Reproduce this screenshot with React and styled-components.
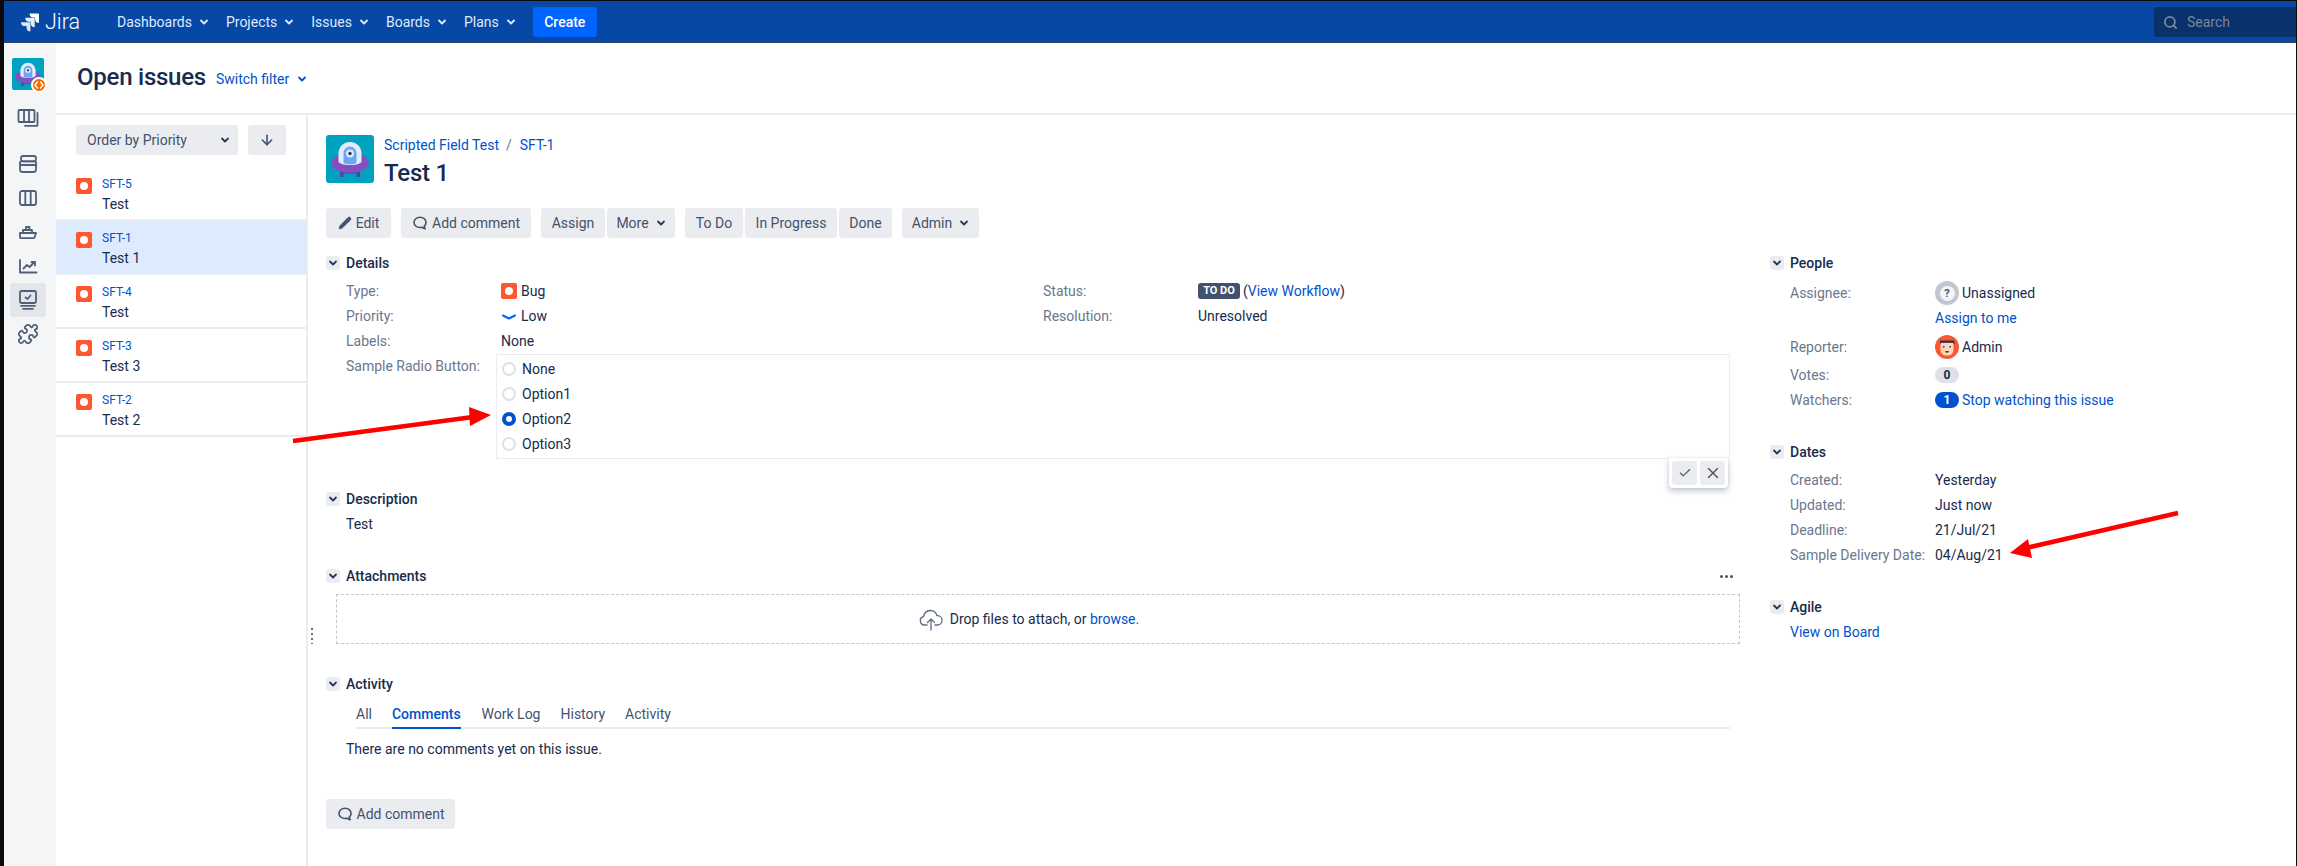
import React from "react";
import styled, { createGlobalStyle } from "styled-components";
import { Puzzle, Search as SearchGlyph, Check, X, ArrowDown, Pencil } from "lucide-react";

const Global = createGlobalStyle`
  html, body { margin: 0; padding: 0; background: #000; }
  body { font: 400 14px/20px Roboto, "Liberation Sans", sans-serif; color: #172b4d; }
  * { box-sizing: border-box; }
`;

const Screen = styled.div`
  position: relative; width: 2297px; height: 866px; overflow: hidden;
  background: #0b0b0b; padding: 1px 1px 0 4px; display: flex; flex-direction: column;
`;
const TopBar = styled.header`
  height: 42px; flex: none; background: #0747a6; border-bottom: 1px solid #2f4468;
  display: flex; align-items: flex-start; padding-top: 6px;
`;
const Logo = styled.div`
  width: 113px; height: 30px; padding-left: 17px; display: flex; align-items: center; gap: 6px; color: #fff;
`;
const LogoWord = styled.span`font: 300 21.5px/30px Roboto, sans-serif;`;
const NavItem = styled.span`
  display: inline-flex; align-items: center; height: 30px; color: #deebff; margin-right: 17px;
`;
const NavChevron = styled.svg`margin-left: 7px; flex: none;`;
const CreateButton = styled.span`
  display: inline-flex; align-items: center; justify-content: center; width: 64px; height: 30px;
  background: #0065ff; color: #fff; border-radius: 3px; font-weight: 500;
`;
const SearchBox = styled.div`
  margin-left: auto; width: 142px; height: 30px; background: #09326c; border-radius: 3px 0 0 3px;
  display: flex; align-items: center; padding-left: 9px; gap: 9px; color: #7a869a;
`;
const Body = styled.div`flex: 1; display: flex; min-height: 0; background: #fff;`;
const Sidebar = styled.nav`
  width: 52px; flex: none; background: #f4f5f7; padding: 15px 4px 0 0; display: flex; flex-direction: column; align-items: center;
`;
const ProjectMark = styled.div`position: relative; width: 32px; height: 32px; margin-bottom: 16px;`;
const SideBadge = styled.span`
  position: absolute; right: -3px; bottom: -3px; width: 16px; height: 16px; border-radius: 50%;
  background: #f26d00; border: 2px solid #fff; display: flex; align-items: center; justify-content: center;
`;
const SideIcon = styled.span`
  width: 36px; height: ${p => p.$h || 34}px; margin-top: ${p => p.$mt || 0}px; flex: none;
  display: flex; align-items: center; justify-content: center; border-radius: 3px; color: #505f79;
  background: ${p => (p.$active ? "#e2e5ea" : "transparent")};
`;
const Main = styled.main`flex: 1; display: flex; flex-direction: column; min-width: 0;`;
const PageHead = styled.div`
  height: 72px; flex: none; border-bottom: 2px solid #ebecf0; padding: 0 0 2px 21px; display: flex; align-items: center;
`;
const PageTitle = styled.h1`margin: 0; font: 500 24px/28px Roboto, sans-serif; letter-spacing: -0.01em; color: #172b4d;`;
const SwitchFilter = styled.a`margin-left: 10px; color: #0052cc; display: inline-flex; align-items: center; gap: 8px; position: relative; top: 2px;`;
const Split = styled.div`flex: 1; display: flex; min-height: 0;`;
const ListPane = styled.aside`width: 252px; flex: none; border-right: 2px solid #ebecf0; padding-top: 10px;`;
const OrderBar = styled.div`display: flex; gap: 10px; padding-left: 20px; margin-bottom: 12px;`;
const OrderSelect = styled.span`
  width: 162px; height: 30px; background: #ebecf0; border-radius: 3px; color: #42526e; padding: 0 8px 0 11px;
  display: flex; align-items: center; justify-content: space-between;
`;
const OrderArrow = styled.span`
  width: 38px; height: 30px; background: #ebecf0; border-radius: 3px; color: #42526e;
  display: flex; align-items: center; justify-content: center;
`;
const IssueRow = styled.div`
  height: 54px; padding: 8px 0 0 20px; border-bottom: 2px solid #ebecf0; display: flex; gap: 10px;
  background: ${p => (p.$selected ? "#deebff" : "#fff")};
`;
const RowIcon = styled.span`margin-top: 3px; flex: none; display: block; height: 16px;`;
const IssueKey = styled.a`display: block; color: #0052cc; font-size: 12px; line-height: 18px;`;
const IssueSummary = styled.div`color: #172b4d; line-height: 20px; margin-top: 1px;`;
const Detail = styled.section`position: relative; flex: 1; padding: 20px 0 0 18px; min-width: 0;`;
const Grip = styled.span`
  position: absolute; left: 3px; top: 513px; width: 2px; height: 16px;
  background: repeating-linear-gradient(to bottom, #5e6c84 0 2px, transparent 2px 5px);
`;
const IssueHead = styled.div`display: flex; gap: 10px; height: 48px;`;
const Crumbs = styled.div`display: flex; color: #0052cc; line-height: 20px;`;
const CrumbSlash = styled.span`color: #6b778c; margin: 0 8px 0 7px;`;
const IssueTitle = styled.h2`margin: 4px 0 0; font: 500 24px/28px Roboto, sans-serif; letter-spacing: -0.01em; color: #172b4d;`;
const Toolbar = styled.div`display: flex; gap: 10px; margin-top: 25px; height: 30px;`;
const ButtonGroup = styled.div`display: flex; gap: 2px;`;
const Btn = styled.span`
  display: inline-flex; align-items: center; justify-content: center; gap: ${p => p.$gap || 0}px; height: 30px;
  width: ${p => p.$w}px; background: #ebecf0; border-radius: 3px; color: #42526e;
`;
const Columns = styled.div`display: grid; grid-template-columns: 1414px 1fr; column-gap: 30px;`;
const ModuleHead = styled.div`
  display: flex; align-items: center; height: 20px; margin-top: ${p => p.$mt}px; gap: 6px; font-weight: 500; color: #172b4d;
`;
const Toggle = styled.span`
  width: 14px; height: 14px; border-radius: 3px; background: #ebecf0; display: flex; align-items: center; justify-content: center; flex: none;
`;
const MoreDots = styled.span`margin-left: auto; padding-right: 7px; display: flex; gap: 2px;`;
const Dot = styled.i`width: 3px; height: 3px; border-radius: 50%; background: #42526e;`;
const FieldGrid = styled.div`display: grid; grid-template-columns: 697px 1fr; margin: 8px 0 0 20px;`;
const Field = styled.div`display: flex; align-items: center; height: 20px; margin-bottom: 5px;`;
const FieldLabel = styled.span`width: ${p => p.$w || 155}px; flex: none; color: #6b778c;`;
const FieldValue = styled.span`display: inline-flex; align-items: center; gap: 4px; color: #172b4d;`;
const Link = styled.a`color: #0052cc;`;
const Lozenge = styled.span`
  height: 16px; width: 42px; border-radius: 3px; background: #42526e; color: #fff; display: inline-flex; align-items: center; justify-content: center;
  font-size: 11px; font-weight: 700; line-height: 16px; margin-right: 3px;
`;
const RadioField = styled.div`display: flex; margin-left: 20px; height: 105px;`;
const RadioBox = styled.div`
  position: relative; width: 1234px; height: 105px; margin: -2px 0 0 -5px; border: 1px solid #ebecf0; padding: 1px 0 0 5px;
`;
const RadioRow = styled.div`display: flex; align-items: center; height: 25px; gap: 6px; color: #172b4d;`;
const Radio = styled.span`
  width: 14px; height: 14px; border-radius: 50%; background: #fff; flex: none;
  border: ${p => (p.$on ? "4px solid #0052cc" : "2px solid #dfe1e6")};
`;
const SavePopup = styled.div`
  position: absolute; right: 1px; top: 103px; width: 59px; height: 30px; background: #fff; border-radius: 0 0 3px 3px;
  box-shadow: 0 3px 6px rgba(9,30,66,.25), 0 0 1px rgba(9,30,66,.31); padding: 3px; display: flex; gap: 3px;
`;
const SaveBtn = styled.span`
  width: 25px; height: 24px; background: #ebecf0; border-radius: 3px; color: #505560; display: flex; align-items: center; justify-content: center;
`;
const Paragraph = styled.p`margin: ${p => p.$mt || 5}px 0 0 20px; line-height: 20px; color: #172b4d;`;
const DropZone = styled.div`
  margin: 8px 0 0 10px; height: 50px; border: 1px dashed #c1c7d0; display: flex; align-items: center; justify-content: center; gap: 7px; padding-right: 18px; color: #172b4d;
`;
const Tabs = styled.div`display: flex; gap: 20px; margin: 10px 10px 0 30px; border-bottom: 2px solid #ebecf0; height: 25px;`;
const Tab = styled.span`
  height: 25px; color: ${p => (p.$active ? "#0052cc" : "#42526e")}; font-weight: ${p => (p.$active ? 500 : 400)};
  border-bottom: 2px solid ${p => (p.$active ? "#0052cc" : "transparent")};
  margin-right: ${p => (p.$active ? 1 : 0)}px;
`;
const BottomButton = styled.div`margin-top: 40px;`;
const SideField = styled.div`display: flex; align-items: center; height: 20px; margin-top: ${p => p.$mt ?? 5}px; padding-left: 20px;`;
const SideValue = styled.span`display: inline-flex; align-items: center; gap: 3px; color: #172b4d;`;
const RoundAvatar = styled.span`
  width: 24px; height: 24px; border-radius: 50%; flex: none; background: #c1c7d0; display: flex; align-items: center; justify-content: center; overflow: hidden;
`;
const AvatarHole = styled.span`
  width: 15px; height: 15px; border-radius: 50%; background: #f4f5f7; color: #42526e; font-size: 11px; font-weight: 700; line-height: 15px; text-align: center;
`;
const Count = styled.span`
  width: 24px; height: 16px; border-radius: 8px; font-size: 12px; font-weight: 700; line-height: 16px; text-align: center; margin-right: 0;
  background: ${p => (p.$blue ? "#0052cc" : "#dfe1e6")}; color: ${p => (p.$blue ? "#fff" : "#172b4d")};
`;
const ArrowLayer = styled.svg`position: absolute; inset: 0; pointer-events: none;`;

const Chevron = ({ size = 10, color = "currentColor", w = 2 }) => (
  <NavChevron as="svg" style={{ margin: 0 }} width={size} height={size} viewBox="0 0 10 10" fill="none">
    <path d="M2 3.5 5 6.5 8 3.5" stroke={color} strokeWidth={w} strokeLinecap="round" strokeLinejoin="round" />
  </NavChevron>
);

const BugIcon = () => (
  <svg width="16" height="16" viewBox="0 0 16 16" style={{ display: "block" }}>
    <rect width="16" height="16" rx="2" fill="#ff5630" />
    <circle cx="8" cy="8" r="4" fill="#fff" />
  </svg>
);

const CommentIcon = () => (
  <svg width="16" height="16" viewBox="0 0 16 16" fill="none">
    <path d="M8 2.2c3.3 0 6 2.3 6 5.2 0 1.5-.7 2.8-1.8 3.7l.9 2.7-3.4-1.5c-.5.1-1.1.2-1.7.2-3.3 0-6-2.3-6-5.1s2.7-5.2 6-5.2z" stroke="#42526e" strokeWidth="1.6" strokeLinejoin="round" />
  </svg>
);

const SpaceAvatar = ({ size }) => (
  <svg width={size} height={size} viewBox="0 0 48 48" style={{ display: "block" }}>
    <rect width="48" height="48" rx="3" fill="#00a3bf" />
    <path d="M14 35h3.500v7H14zM30.500 35H34v7h-3.500z" fill="#5243aa" />
    <rect x="14" y="35" width="20" height="3.500" fill="#5243aa" />
    <ellipse cx="24" cy="28" rx="19" ry="10" fill="#8350c0" />
    <path d="M12.500 26V18.500a11.500 11.500 0 0 1 23 0V26c0 2.500-5 4-11.500 4s-11.500-1.500-11.500-4z" fill="#e4ecf9" />
    <path d="M17.500 28V18a6.500 6.500 0 0 1 13 0v10c-1.500.8-4 1.300-6.500 1.300s-5-.5-6.500-1.300z" fill="#6aa6f8" />
    <circle cx="24" cy="18.500" r="4" fill="#deebff" />
    <circle cx="24" cy="18.500" r="1.700" fill="#253858" />
  </svg>
);

const JiraMark = () => (
  <svg width="18" height="19" viewBox="0 0 24 24" style={{ display: "block" }}>
    <path fill="#fff" opacity=".86" d="M11.571 11.513H0a5.218 5.218 0 0 0 5.232 5.215h2.13v2.057A5.215 5.215 0 0 0 12.575 24V12.518a1.005 1.005 0 0 0-1.005-1.005z" />
    <path fill="#fff" opacity=".92" d="M17.294 5.757H5.736a5.215 5.215 0 0 0 5.215 5.214h2.129v2.058a5.218 5.218 0 0 0 5.215 5.214V6.758a1.001 1.001 0 0 0-1.001-1.001z" />
    <path fill="#fff" d="M23.013 0H11.455a5.215 5.215 0 0 0 5.215 5.215h2.129v2.057A5.215 5.215 0 0 0 24 12.483V1.005A1.001 1.001 0 0 0 23.013 0z" />
  </svg>
);

const strokeProps = { fill: "none", stroke: "currentColor", strokeWidth: 1.8, strokeLinejoin: "round", strokeLinecap: "round" };
const RoadIcon = () => (
  <svg width="24" height="24" viewBox="0 0 24 24" {...strokeProps}>
    <rect x="2.500" y="4" width="16" height="12" rx="1" />
    <path d="M8 4v12M13 4v12M21.500 7v12a.8.8 0 0 1-.8.8H9" />
  </svg>
);
const BacklogIcon = () => (
  <svg width="24" height="24" viewBox="0 0 24 24" {...strokeProps}>
    <rect x="5" y="4" width="15" height="5.300" rx="2.200" />
    <path d="M5 9.300h14a1 1 0 0 1 1 1v2.700H5a1 1 0 0 1-1-1v-1.700a1 1 0 0 1 1-1z" />
    <path d="M4.500 13H20v4.500a2.500 2.500 0 0 1-2.500 2.500h-11A2.500 2.500 0 0 1 4 17.500v-4z" />
  </svg>
);
const BoardIcon = () => (
  <svg width="24" height="24" viewBox="0 0 24 24" {...strokeProps}>
    <rect x="4" y="5" width="16" height="14" rx="2" />
    <path d="M9.300 5v14M14.700 5v14" />
  </svg>
);
const ShipIcon = () => (
  <svg width="24" height="24" viewBox="0 0 24 24" {...strokeProps}>
    <path d="M4 13h16l-1.500 4.500a1 1 0 0 1-1 .700H5a1 1 0 0 1-1-1z" />
    <path d="M7 13v-3h9v3M10 10V7h3.500v3" />
  </svg>
);
const ChartIcon = () => (
  <svg width="24" height="24" viewBox="0 0 24 24" {...strokeProps}>
    <path d="M4 6v12.500h16.500" />
    <path d="M7.500 14.500 11 11l2.500 2 5-5M15.500 8H19v3.500" />
  </svg>
);
const IssuesIcon = () => (
  <svg width="24" height="24" viewBox="0 0 24 24" {...strokeProps}>
    <rect x="4" y="3" width="16" height="12" rx="1.500" />
    <path d="M9.500 9.500 11.500 11 14.500 7.500" />
    <path d="M5 17.800h14M7 20.800h10" />
  </svg>
);
const CloudIcon = () => (
  <svg width="24" height="24" viewBox="0 0 24 24" fill="none" stroke="#5e6c84" strokeWidth="1.300" strokeLinecap="round" strokeLinejoin="round">
    <path d="M8 18H5.500a4.300 4.300 0 0 1-.8-8.500 7 7 0 0 1 6.500-6 6.500 6.500 0 0 1 6.700 5.200 4.600 4.600 0 0 1 1 9.300H16" />
    <path d="M12 23V12M8.500 15.500 12 12l3.500 3.500" />
  </svg>
);
const AdminFace = () => (
  <svg width="24" height="24" viewBox="0 0 24 24" style={{ display: "block" }}>
    <circle cx="12" cy="12" r="12" fill="#ff5630" />
    <path d="M5.500 8h13v7a5.500 5.500 0 0 1-5.500 5.500h-2A5.500 5.500 0 0 1 5.500 15z" fill="#ffd5b8" />
    <path d="M5 9.500V5.500h14l1 4-2-1.500-1-.3H6z" fill="#253858" />
    <rect x="8" y="11" width="1.500" height="1.500" fill="#253858" />
    <rect x="14.500" y="11" width="1.500" height="1.500" fill="#253858" />
    <path d="M10 16h4l-1 1.800h-2z" fill="#5a3a2a" />
  </svg>
);

const Caret = () => <Chevron size={10} color="#253858" w={1.800} />;

const Nav = ({ children }) => (
  <NavItem>
    {children}
    <NavChevron width="10" height="10" viewBox="0 0 10 10" fill="none">
      <path d="M2 3.500 5 6.500 8 3.500" stroke="#deebff" strokeWidth="1.800" strokeLinecap="round" strokeLinejoin="round" />
    </NavChevron>
  </NavItem>
);

const issues = [
  ["SFT-5", "Test"],
  ["SFT-1", "Test 1", true],
  ["SFT-4", "Test"],
  ["SFT-3", "Test 3"],
  ["SFT-2", "Test 2"],
];

export default function App() {
  return (
    <Screen>
      <Global />
      <TopBar>
        <Logo><JiraMark /><LogoWord>Jira</LogoWord></Logo>
        <Nav>Dashboards</Nav>
        <Nav>Projects</Nav>
        <Nav>Issues</Nav>
        <Nav>Boards</Nav>
        <Nav>Plans</Nav>
        <CreateButton>Create</CreateButton>
        <SearchBox><SearchGlyph size={15} strokeWidth={3} />Search</SearchBox>
      </TopBar>
      <Body>
        <Sidebar>
          <ProjectMark>
            <SpaceAvatar size={32} />
            <SideBadge>
              <svg width="10" height="8" viewBox="0 0 10 8" fill="none" stroke="#fff" strokeWidth="1.400" strokeLinecap="round" strokeLinejoin="round">
                <path d="M3.500 1 1 4l2.500 3M6.500 1 9 4 6.500 7" />
              </svg>
            </SideBadge>
          </ProjectMark>
          <SideIcon $h={24}><RoadIcon /></SideIcon>
          <SideIcon $mt={17}><BacklogIcon /></SideIcon>
          <SideIcon><BoardIcon /></SideIcon>
          <SideIcon><ShipIcon /></SideIcon>
          <SideIcon><ChartIcon /></SideIcon>
          <SideIcon $active><IssuesIcon /></SideIcon>
          <SideIcon><Puzzle size={22} strokeWidth={1.900} /></SideIcon>
        </Sidebar>
        <Main>
          <PageHead>
            <PageTitle>Open issues</PageTitle>
            <SwitchFilter>Switch filter <Chevron size={10} color="#0052cc" w={1.800} /></SwitchFilter>
          </PageHead>
          <Split>
            <ListPane>
              <OrderBar>
                <OrderSelect>Order by Priority <Caret /></OrderSelect>
                <OrderArrow><ArrowDown size={16} strokeWidth={2.400} /></OrderArrow>
              </OrderBar>
              {issues.map(([key, title, sel]) => (
                <IssueRow key={key} $selected={sel}>
                  <RowIcon><BugIcon /></RowIcon>
                  <div>
                    <IssueKey>{key}</IssueKey>
                    <IssueSummary>{title}</IssueSummary>
                  </div>
                </IssueRow>
              ))}
            </ListPane>
            <Detail>
              <Grip />
              <IssueHead>
                <SpaceAvatar size={48} />
                <div>
                  <Crumbs>Scripted Field Test<CrumbSlash>/</CrumbSlash>SFT-1</Crumbs>
                  <IssueTitle>Test 1</IssueTitle>
                </div>
              </IssueHead>
              <Toolbar>
                <Btn $w={65} $gap={4}><Pencil size={14} fill="#42526e" strokeWidth={1.500} />Edit</Btn>
                <Btn $w={130} $gap={4}><CommentIcon />Add comment</Btn>
                <ButtonGroup>
                  <Btn $w={64}>Assign</Btn>
                  <Btn $w={68} $gap={7}>More <Caret /></Btn>
                </ButtonGroup>
                <ButtonGroup>
                  <Btn $w={58}>To Do</Btn>
                  <Btn $w={92}>In Progress</Btn>
                  <Btn $w={53}>Done</Btn>
                </ButtonGroup>
                <Btn $w={77} $gap={7}>Admin <Caret /></Btn>
              </Toolbar>
              <Columns>
                <div>
                  <ModuleHead $mt={15}><Toggle><Caret /></Toggle>Details</ModuleHead>
                  <FieldGrid>
                    <Field><FieldLabel>Type:</FieldLabel><FieldValue><BugIcon />Bug</FieldValue></Field>
                    <Field>
                      <FieldLabel>Status:</FieldLabel>
                      <FieldValue style={{ gap: 0 }}><Lozenge>TO DO</Lozenge>(<Link>View Workflow</Link>)</FieldValue>
                    </Field>
                    <Field>
                      <FieldLabel>Priority:</FieldLabel>
                      <FieldValue>
                        <svg width="16" height="16" viewBox="0 0 16 16" fill="none" style={{ display: "block" }}>
                          <path d="M2 7.500 8 10.500 14 7.500" stroke="#0065ff" strokeWidth="2" strokeLinecap="round" strokeLinejoin="round" />
                        </svg>
                        Low
                      </FieldValue>
                    </Field>
                    <Field><FieldLabel>Resolution:</FieldLabel><FieldValue>Unresolved</FieldValue></Field>
                    <Field><FieldLabel>Labels:</FieldLabel><FieldValue>None</FieldValue></Field>
                  </FieldGrid>
                  <RadioField>
                    <FieldLabel>Sample Radio Button:</FieldLabel>
                    <RadioBox>
                      <RadioRow><Radio />None</RadioRow>
                      <RadioRow><Radio />Option1</RadioRow>
                      <RadioRow><Radio $on />Option2</RadioRow>
                      <RadioRow><Radio />Option3</RadioRow>
                      <SavePopup>
                        <SaveBtn><Check size={14} strokeWidth={2} /></SaveBtn>
                        <SaveBtn><X size={18} strokeWidth={2} /></SaveBtn>
                      </SavePopup>
                    </RadioBox>
                  </RadioField>
                  <ModuleHead $mt={28}><Toggle><Caret /></Toggle>Description</ModuleHead>
                  <Paragraph>Test</Paragraph>
                  <ModuleHead $mt={32}>
                    <Toggle><Caret /></Toggle>Attachments
                    <MoreDots><Dot /><Dot /><Dot /></MoreDots>
                  </ModuleHead>
                  <DropZone><CloudIcon /><span>Drop files to attach, or <Link>browse.</Link></span></DropZone>
                  <ModuleHead $mt={30}><Toggle><Caret /></Toggle>Activity</ModuleHead>
                  <Tabs>
                    <Tab>All</Tab>
                    <Tab $active>Comments</Tab>
                    <Tab>Work Log</Tab>
                    <Tab>History</Tab>
                    <Tab>Activity</Tab>
                  </Tabs>
                  <Paragraph $mt={10}>There are no comments yet on this issue.</Paragraph>
                  <BottomButton><Btn $w={129} $gap={4}><CommentIcon />Add comment</Btn></BottomButton>
                </div>
                <div>
                  <ModuleHead $mt={15}><Toggle><Caret /></Toggle>People</ModuleHead>
                  <SideField $mt={10}>
                    <FieldLabel $w={145}>Assignee:</FieldLabel>
                    <SideValue><RoundAvatar><AvatarHole>?</AvatarHole></RoundAvatar>Unassigned</SideValue>
                  </SideField>
                  <SideField><FieldLabel $w={145} /><Link>Assign to me</Link></SideField>
                  <SideField $mt={9}>
                    <FieldLabel $w={145}>Reporter:</FieldLabel>
                    <SideValue><RoundAvatar><AdminFace /></RoundAvatar>Admin</SideValue>
                  </SideField>
                  <SideField $mt={8}><FieldLabel $w={145}>Votes:</FieldLabel><SideValue><Count>0</Count></SideValue></SideField>
                  <SideField>
                    <FieldLabel $w={145}>Watchers:</FieldLabel>
                    <SideValue><Count $blue>1</Count><Link>Stop watching this issue</Link></SideValue>
                  </SideField>
                  <ModuleHead $mt={32}><Toggle><Caret /></Toggle>Dates</ModuleHead>
                  <SideField $mt={8}><FieldLabel $w={145}>Created:</FieldLabel><SideValue>Yesterday</SideValue></SideField>
                  <SideField><FieldLabel $w={145}>Updated:</FieldLabel><SideValue>Just now</SideValue></SideField>
                  <SideField><FieldLabel $w={145}>Deadline:</FieldLabel><SideValue>21/Jul/21</SideValue></SideField>
                  <SideField><FieldLabel $w={145}>Sample Delivery Date:</FieldLabel><SideValue>04/Aug/21</SideValue></SideField>
                  <ModuleHead $mt={32}><Toggle><Caret /></Toggle>Agile</ModuleHead>
                  <SideField><Link>View on Board</Link></SideField>
                </div>
              </Columns>
            </Detail>
          </Split>
        </Main>
      </Body>
      <ArrowLayer width="2297" height="866" viewBox="0 0 2297 866">
        <path d="M293 441 473 417" stroke="#f00" strokeWidth="4.500" />
        <path d="M469 407 491 415 470 426z" fill="#f00" />
        <path d="M2178 513 2026 548" stroke="#f00" strokeWidth="4.500" />
        <path d="M2028 539 2010 553 2032 558z" fill="#f00" />
      </ArrowLayer>
    </Screen>
  );
}
